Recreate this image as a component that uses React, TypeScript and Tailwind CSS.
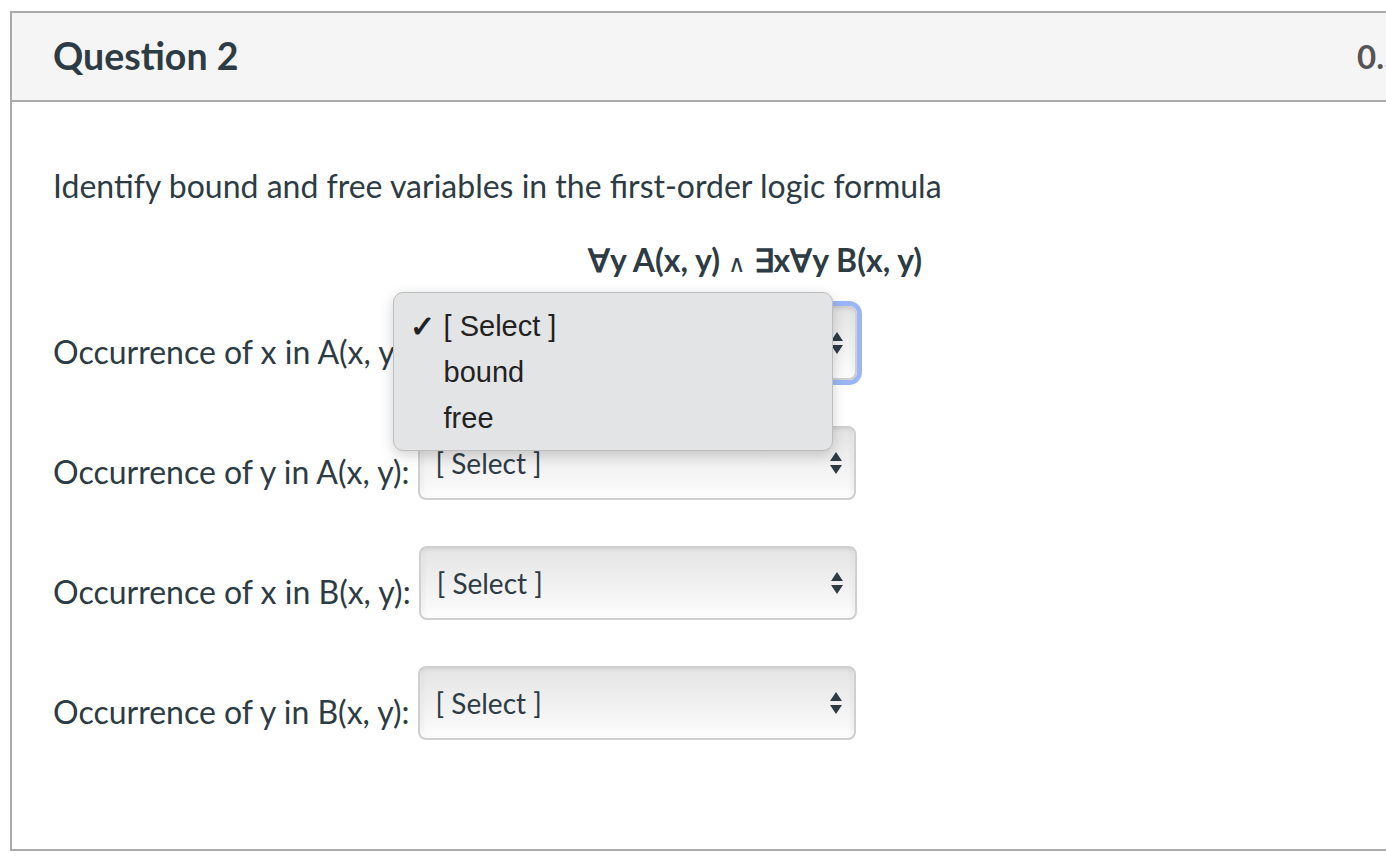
import React from "react";

const labels = [
  "Occurrence of x in A(x, y):",
  "Occurrence of y in A(x, y):",
  "Occurrence of x in B(x, y):",
  "Occurrence of y in B(x, y):",
];

function Arrows() {
  return (
    <svg width="14" height="24" viewBox="0 0 14 24" className="shrink-0">
      <path d="M7 1 L13 10 L1 10 Z" fill="#2d3b45" />
      <path d="M1 14 L13 14 L7 23 Z" fill="#2d3b45" />
    </svg>
  );
}

function FakeSelect({ focused }: { focused?: boolean }) {
  return (
    <div
      className={
        "flex h-[74px] w-[438px] shrink-0 items-center justify-between rounded-[8px] border-2 border-[#cfcfcf] bg-gradient-to-b from-[#e4e4e4] via-[#f0f0f0] to-[#fdfdfd] pr-[11px] pl-[16px] shadow-[inset_0_-3px_4px_rgba(255,255,255,0.9),inset_2px_0_4px_rgba(0,0,0,0.08),inset_-2px_0_4px_rgba(0,0,0,0.08)] " +
        (focused ? "ring-[5px] ring-[#9ab6f4]" : "")
      }
    >
      <span className="text-[28px] leading-none text-[#2d3b45]">[ Select ]</span>
      <Arrows />
    </div>
  );
}

function Menu() {
  return (
    <div className="absolute top-[-14px] left-[-26px] z-10 w-[440px] rounded-[10px] border border-[#bdbdbd] bg-[#e3e4e6] pt-[11px] pb-[8px] shadow-[0_4px_14px_rgba(0,0,0,0.18)] font-['Liberation_Sans',Arial,sans-serif] text-[29px] text-[#222]">
      <div className="flex h-[46px] items-center">
        <span className="w-[50px] pl-[16px] text-[30px] font-bold leading-none">✓</span>
        <span>[ Select ]</span>
      </div>
      <div className="flex h-[46px] items-center pl-[50px]">bound</div>
      <div className="flex h-[46px] items-center pl-[50px]">free</div>
    </div>
  );
}

export default function App() {
  return (
    <div className="h-[858px] w-[1386px] overflow-hidden bg-white pt-[11px] pl-[10px] font-['Lato',sans-serif] text-[#2d3b45]">
      <div className="h-[840px] w-[1500px] border-2 border-r-0 border-[#aaa]">
        <div className="flex h-[89px] items-center border-b-2 border-[#aaa] bg-[#f5f5f5]">
          <h2 className="flex-1 pl-[41px] text-[37.5px] font-bold">Question 2</h2>
          <span className="w-[153px] shrink-0 text-[33px] font-bold text-[#555]">0.5 pts</span>
        </div>
        <div className="pt-[66px] pl-[41px]">
          <p className="text-[32px] leading-[36px]">
            Identify bound and free variables in the first-order logic formula
          </p>
          <p className="mt-[38px] pl-[535px] text-[32px] font-bold leading-[36px]">
            ∀y A(x, y) <span className="font-normal text-[24px]">∧</span> ∃x∀y B(x, y)
          </p>
          <div className="mt-[25px] flex flex-col gap-[46px]">
            {labels.map((l, i) => (
              <div key={l} className="flex items-start gap-[8px]">
                <span className="mt-[26px] text-[32px] leading-[40px]">{l}</span>
                <div className="relative">
                  <FakeSelect focused={i === 0} />
                  {i === 0 && <Menu />}
                </div>
              </div>
            ))}
          </div>
        </div>
      </div>
    </div>
  );
}
